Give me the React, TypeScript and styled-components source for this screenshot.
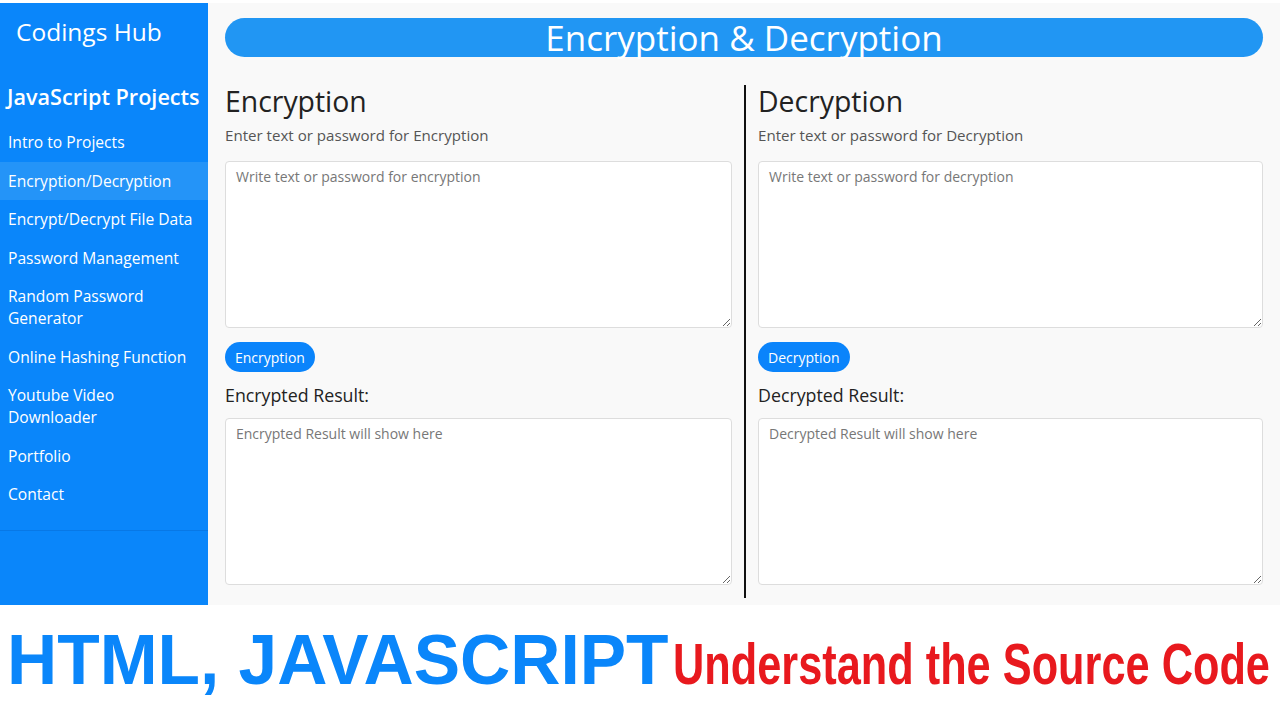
import React from "react";
import styled, { createGlobalStyle } from "styled-components";

const GlobalStyle = createGlobalStyle`
  html, body {
    margin: 0;
    padding: 0;
    background: #ffffff;
    font-family: "Open Sans", "Noto Sans", sans-serif;
  }
  * {
    box-sizing: border-box;
  }
`;

const Page = styled.div`
  width: 1280px;
  height: 720px;
  display: flex;
  flex-direction: column;
  overflow: hidden;
`;

const AppFrame = styled.div`
  margin-top: 3px;
  height: 602px;
  display: flex;
`;

const Sidebar = styled.nav`
  width: 208px;
  background: #0a86fa;
  color: #ffffff;
  display: flex;
  flex-direction: column;
`;

const Brand = styled.div`
  font-size: 24.5px;
  font-weight: 500;
  padding: 12px 0 0 16px;
  height: 72px;
`;

const SectionTitle = styled.div`
  font-size: 21.6px;
  font-weight: 600;
  padding: 0 0 0 7px;
  height: 48px;
  line-height: 44px;
`;

const NavList = styled.ul`
  list-style: none;
  margin: 0;
  padding: 0 0 16px 0;
  border-bottom: 1px solid rgba(0, 60, 140, 0.18);
`;

const NavItem = styled.li<{ $active?: boolean }>`
  font-size: 15.6px;
  line-height: 22px;
  padding: 8px 8px 8.5px 8px;
  background: ${(p) => (p.$active ? "#2494f8" : "transparent")};
`;

const Main = styled.main`
  flex: 1;
  background: #f9f9f9;
  padding: 15px 17px 0 17px;
`;

const Banner = styled.h1`
  margin: 0;
  height: 39px;
  border-radius: 20px;
  background: #2196f3;
  color: #ffffff;
  font-size: 35px;
  font-weight: 500;
  line-height: 39px;
  text-align: center;
`;

const Columns = styled.div`
  margin-top: 28px;
  display: grid;
  grid-template-columns: 507px 2px 505px;
  column-gap: 12px;
`;

const Divider = styled.div`
  background: #111111;
  height: 513px;
`;

const Panel = styled.section`
  display: flex;
  flex-direction: column;
`;

const PanelTitle = styled.h2`
  margin: 0;
  font-size: 28.4px;
  font-weight: 500;
  color: #222222;
  line-height: 32px;
`;

const PanelHint = styled.p`
  margin: 8px 0 0 0;
  font-size: 15.1px;
  color: #555555;
  line-height: 20px;
`;

const TextBox = styled.textarea`
  margin-top: 16px;
  width: 100%;
  height: 167px;
  border: 1px solid #dddddd;
  border-radius: 4px;
  background: #ffffff;
  padding: 5px 10px;
  font-family: "Open Sans", "Noto Sans", sans-serif;
  font-size: 14px;
  line-height: 20px;
  color: #333333;
  resize: vertical;
  &::placeholder {
    color: #777777;
  }
`;

const ActionButton = styled.button`
  margin-top: 14px;
  align-self: flex-start;
  height: 30px;
  padding: 0 10px;
  border: none;
  border-radius: 15px;
  background: #0a84fb;
  color: #ffffff;
  font-family: "Open Sans", "Noto Sans", sans-serif;
  font-size: 14px;
  cursor: pointer;
`;

const ResultLabel = styled.h3`
  margin: 12px 0 0 0;
  font-size: 17.8px;
  font-weight: 500;
  color: #222222;
  line-height: 22px;
`;

const ResultBox = styled(TextBox)`
  margin-top: 12px;
  height: 167px;
`;

const Footer = styled.footer`
  flex: 1;
  display: flex;
  align-items: baseline;
  padding: 0 0 0 7px;
  background: #ffffff;
`;

const BigTech = styled.div`
  font-family: "Liberation Sans", Arial, sans-serif;
  font-weight: 700;
  font-size: 69.5px;
  color: #0a86fa;
  line-height: 110px;
  white-space: nowrap;
`;

const Tagline = styled.div`
  width: 600px;
  font-family: "Liberation Sans", Arial, sans-serif;
  font-weight: 700;
  font-size: 57px;
  color: #e8191e;
  white-space: nowrap;
  transform: scaleX(0.76);
  transform-origin: left;
  margin-left: 4px;
`;

const navItems = [
  "Intro to Projects",
  "Encryption/Decryption",
  "Encrypt/Decrypt File Data",
  "Password Management",
  "Random Password Generator",
  "Online Hashing Function",
  "Youtube Video Downloader",
  "Portfolio",
  "Contact",
];

const PanelBlock: React.FC<{
  title: string;
  mode: string;
  action: string;
  result: string;
}> = ({ title, mode, action, result }) => (
  <Panel>
    <PanelTitle>{title}</PanelTitle>
    <PanelHint>Enter text or password for {title}</PanelHint>
    <TextBox placeholder={`Write text or password for ${mode}`} />
    <ActionButton>{action}</ActionButton>
    <ResultLabel>{result}:</ResultLabel>
    <ResultBox placeholder={`${result} will show here`} readOnly />
  </Panel>
);

const App: React.FC = () => {
  return (
    <Page>
      <GlobalStyle />
      <AppFrame>
        <Sidebar>
          <Brand>Codings Hub</Brand>
          <SectionTitle>JavaScript Projects</SectionTitle>
          <NavList>
            {navItems.map((item) => (
              <NavItem key={item} $active={item === "Encryption/Decryption"}>
                {item === "Random Password Generator" ? (
                  <>
                    Random Password
                    <br />
                    Generator
                  </>
                ) : item === "Youtube Video Downloader" ? (
                  <>
                    Youtube Video
                    <br />
                    Downloader
                  </>
                ) : (
                  item
                )}
              </NavItem>
            ))}
          </NavList>
        </Sidebar>
        <Main>
          <Banner>Encryption &amp; Decryption</Banner>
          <Columns>
            <PanelBlock
              title="Encryption"
              mode="encryption"
              action="Encryption"
              result="Encrypted Result"
            />
            <Divider />
            <PanelBlock
              title="Decryption"
              mode="decryption"
              action="Decryption"
              result="Decrypted Result"
            />
          </Columns>
        </Main>
      </AppFrame>
      <Footer>
        <BigTech>HTML, JAVASCRIPT</BigTech>
        <Tagline>Understand the Source Code</Tagline>
      </Footer>
    </Page>
  );
};

export default App;
